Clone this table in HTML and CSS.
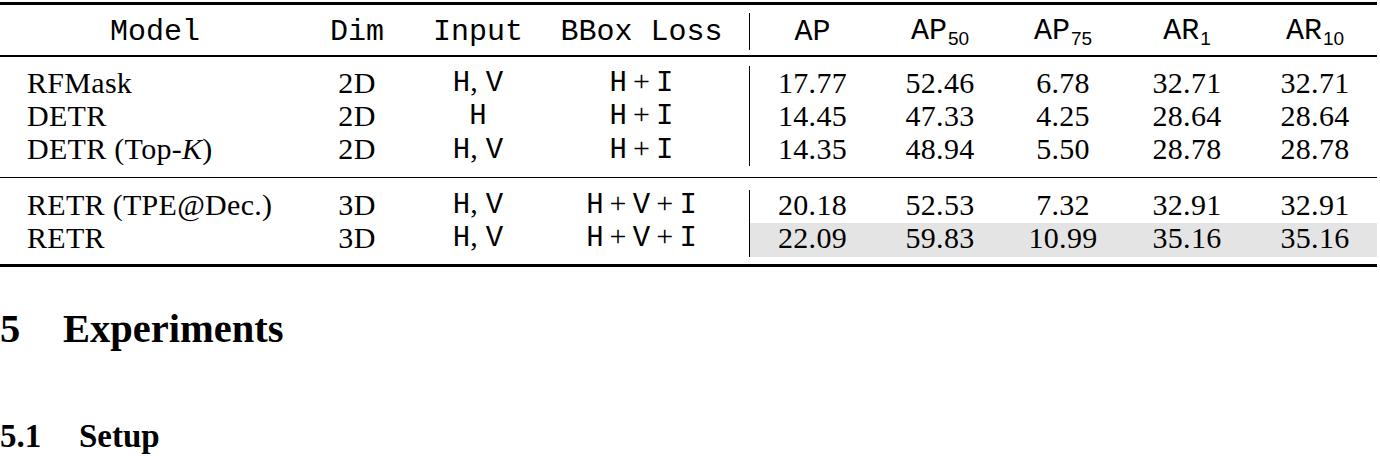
FILE: index.html
```html
<!DOCTYPE html>
<html>
<head>
<meta charset="utf-8">
<link rel="stylesheet" href="styles.css">
</head>
<body>
<table class="results">
  <colgroup>
    <col class="c-model"><col class="c-dim"><col class="c-input"><col class="c-loss">
    <col class="c-ap"><col class="c-ap50"><col class="c-ap75"><col class="c-ar1"><col class="c-ar10">
  </colgroup>
  <thead>
    <tr class="gap g-top"><td colspan="9"></td></tr>
    <tr class="head">
      <th class="tt">Model</th>
      <th class="tt">Dim</th>
      <th class="tt">Input</th>
      <th class="tt loss">BBox Loss</th>
      <th class="tt sep">AP</th>
      <th class="tt">AP<span class="sub">50</span></th>
      <th class="tt">AP<span class="sub">75</span></th>
      <th class="tt">AR<span class="sub">1</span></th>
      <th class="tt">AR<span class="sub">10</span></th>
    </tr>
    <tr class="gap g-headbot"><td colspan="9"></td></tr>
  </thead>
  <tbody>
    <tr class="gap g-mid1"><td colspan="9"></td></tr>
    <tr>
      <td class="model">RFMask</td><td>2D</td>
      <td><span class="tt">H</span>, <span class="tt">V</span></td>
      <td class="loss"><span class="tt">H</span><span class="op">+</span><span class="tt">I</span></td>
      <td class="sep">17.77</td><td>52.46</td><td>6.78</td><td>32.71</td><td>32.71</td>
    </tr>
    <tr>
      <td class="model">DETR</td><td>2D</td>
      <td><span class="tt">H</span></td>
      <td class="loss"><span class="tt">H</span><span class="op">+</span><span class="tt">I</span></td>
      <td class="sep">14.45</td><td>47.33</td><td>4.25</td><td>28.64</td><td>28.64</td>
    </tr>
    <tr>
      <td class="model">DETR (Top-<i>K</i>)</td><td>2D</td>
      <td><span class="tt">H</span>, <span class="tt">V</span></td>
      <td class="loss"><span class="tt">H</span><span class="op">+</span><span class="tt">I</span></td>
      <td class="sep">14.35</td><td>48.94</td><td>5.50</td><td>28.78</td><td>28.78</td>
    </tr>
    <tr class="gap g-mid2"><td colspan="9"></td></tr>
  </tbody>
  <tbody class="group2">
    <tr class="gap g-mid3"><td colspan="9"></td></tr>
    <tr>
      <td class="model">RETR (TPE@Dec.)</td><td>3D</td>
      <td><span class="tt">H</span>, <span class="tt">V</span></td>
      <td class="loss"><span class="tt">H</span><span class="op">+</span><span class="tt">V</span><span class="op">+</span><span class="tt">I</span></td>
      <td class="sep">20.18</td><td>52.53</td><td>7.32</td><td>32.91</td><td>32.91</td>
    </tr>
    <tr class="best">
      <td class="model">RETR</td><td>3D</td>
      <td><span class="tt">H</span>, <span class="tt">V</span></td>
      <td class="loss"><span class="tt">H</span><span class="op">+</span><span class="tt">V</span><span class="op">+</span><span class="tt">I</span></td>
      <td class="sep hl">22.09</td><td class="hl">59.83</td><td class="hl">10.99</td><td class="hl">35.16</td><td class="hl">35.16</td>
    </tr>
    <tr class="gap g-bot"><td colspan="9"></td></tr>
  </tbody>
</table>

<h2 class="section"><span class="num">5</span>Experiments</h2>
<h3 class="subsection"><span class="num">5.1</span>Setup</h3>
</body>
</html>
```

FILE: styles.css
```css
html, body {
  margin: 0;
  padding: 0;
  background: #fff;
}

body {
  font-family: "Liberation Serif", "Times New Roman", serif;
  color: #000;
  width: 1380px;
  height: 456px;
  overflow: hidden;
}

.results {
  border-collapse: separate;
  border-spacing: 0;
  table-layout: fixed;
  width: 1377px;
  font-size: 30px;
  letter-spacing: 0.3px;
  line-height: 1;
  margin-top: 2px;
}

.c-model { width: 310px; }
.c-dim { width: 94px; }
.c-input { width: 148px; }
.c-loss { width: 197px; }
.c-ap { width: 126px; }
.c-ap50 { width: 130px; }
.c-ap75 { width: 116px; }
.c-ar1 { width: 132px; }
.c-ar10 { width: 124px; }

.results th,
.results td {
  padding: 0;
  text-align: center;
  font-weight: normal;
  white-space: nowrap;
  vertical-align: middle;
  line-height: 24px;
}

.results tr.head th {
  height: 37px;
}

.results tbody tr td {
  height: 33.33px;
}

.results .group2 tr td {
  height: 29.33px;
  padding-bottom: 4px;
}

.results td.model {
  text-align: left;
  padding-left: 27px;
}

.results .loss {
  padding-right: 18px;
}

.results .sep {
  border-left: 1.5px solid #000;
}

.results tr.gap td {
  padding: 0;
  line-height: 0;
  font-size: 0;
}

.results tr.g-top td { border-top: 3px solid #000; height: 8px; }
.results tr.g-headbot td { height: 5px; }
.results tr.g-mid1 td { border-top: 2px solid #000; height: 9px; }
.results tr.g-mid2 td { height: 11px; }
.results .group2 tr.g-mid3 td { border-top: 1.5px solid #000; height: 12px; padding: 0; }
.results .group2 tr.g-bot td { height: 7px; border-bottom: 3px solid #000; padding: 0; }

.results td.hl {
  background: #e4e4e4;
}

.tt {
  font-family: "Liberation Mono", "Courier New", monospace;
  font-size: 29px;
  letter-spacing: 0;
}

.results th.tt {
  font-size: 30px;
}

span.tt,
span.op {
  display: inline-block;
  line-height: 24px;
}

.sub {
  font-family: "Liberation Sans", Arial, sans-serif;
  font-size: 19px;
  position: relative;
  top: 6px;
  margin-left: 1px;
}

.op {
  font-family: "Liberation Serif", serif;
  margin: 0 6px;
}

.results i {
  font-style: italic;
}

.section {
  font-size: 40.5px;
  font-weight: bold;
  margin: 39px 0 0 0;
  line-height: 46px;
  display: flex;
}

.section .num {
  width: 63px;
}

.subsection {
  font-size: 33px;
  font-weight: bold;
  margin: 65px 0 0 0;
  line-height: 38px;
  display: flex;
}

.subsection .num {
  width: 79px;
}
```
